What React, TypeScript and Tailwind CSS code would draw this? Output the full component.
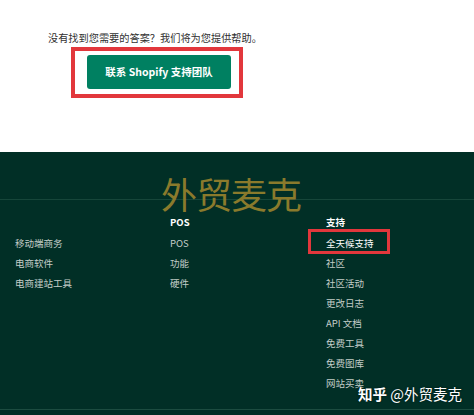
const font = "font-['Microsoft_YaHei','Noto_Sans_CJK_SC',sans-serif]";

const colOne = ["移动端商务", "电商软件", "电商建站工具"];
const colTwo = ["POS", "功能", "硬件"];
const colThree = ["社区", "社区活动", "更改日志", "API 文档", "免费工具", "免费图库", "网站买卖"];

function Item({ children }: { children: React.ReactNode }) {
  return <li className="h-[20px] leading-[20px] text-[9.5px] text-[#c3cdc8]">{children}</li>;
}

function Heading({ children }: { children: React.ReactNode }) {
  return <h3 className="h-[21px] leading-[20px] text-[9.5px] font-bold text-white">{children}</h3>;
}

export default function App() {
  return (
    <div className={`w-[474px] h-[415px] overflow-hidden flex flex-col ${font}`}>
      {/* help section */}
      <section className="h-[152px] bg-white pt-[31px] pl-[48px]">
        <p className="text-[10.2px] leading-[14px] text-[#303030]">
          没有找到您需要的答案？我们将为您提供帮助。
        </p>
        <div className="ml-[23px] mt-[2px] w-[172px] h-[51px] border-4 border-[#e2373c] pl-[12px] pt-[4px]">
          <button
            type="button"
            className="w-[144px] h-[34px] rounded-[3px] bg-[#008061] text-white text-[10.5px] font-bold"
          >
            联系 Shopify 支持团队
          </button>
        </div>
      </section>

      {/* footer */}
      <footer className="relative flex-1 flex flex-col bg-[#012f26]">
        <div className="h-[48px] border-b border-[#16463a]" />
        <div className="absolute left-[161px] top-[23px] text-[36px] leading-[36px] text-[#8a7a2c] tracking-[-1px]">
          外贸麦克
        </div>

        <div className="relative flex-1 grid grid-cols-[155px_156px_1fr] pl-[15px] pt-[12px] border-b border-[#1c4c40]">
          <ul className="pt-[21px]">
            {colOne.map((t) => (
              <Item key={t}>{t}</Item>
            ))}
          </ul>
          <div>
            <Heading>POS</Heading>
            <ul>
              {colTwo.map((t) => (
                <Item key={t}>{t}</Item>
              ))}
            </ul>
          </div>
          <div>
            <Heading>支持</Heading>
            <ul>
              <li className="relative h-[20px] leading-[20px] text-[9.5px] text-white">
                全天候支持
                <span className="absolute left-[-18px] top-[-4px] w-[82px] h-[25px] border-[3px] border-[#e2373c]" />
              </li>
              {colThree.map((t) => (
                <Item key={t}>{t}</Item>
              ))}
            </ul>
          </div>
        </div>
        <div className="h-[5px]" />

        <div className="absolute left-[358px] top-[232px] text-[14.5px] leading-[20px] text-white [text-shadow:0_0_2px_rgba(0,0,0,0.6)]">
          <span className="font-bold">知乎</span> @外贸麦克
        </div>
      </footer>
    </div>
  );
}
